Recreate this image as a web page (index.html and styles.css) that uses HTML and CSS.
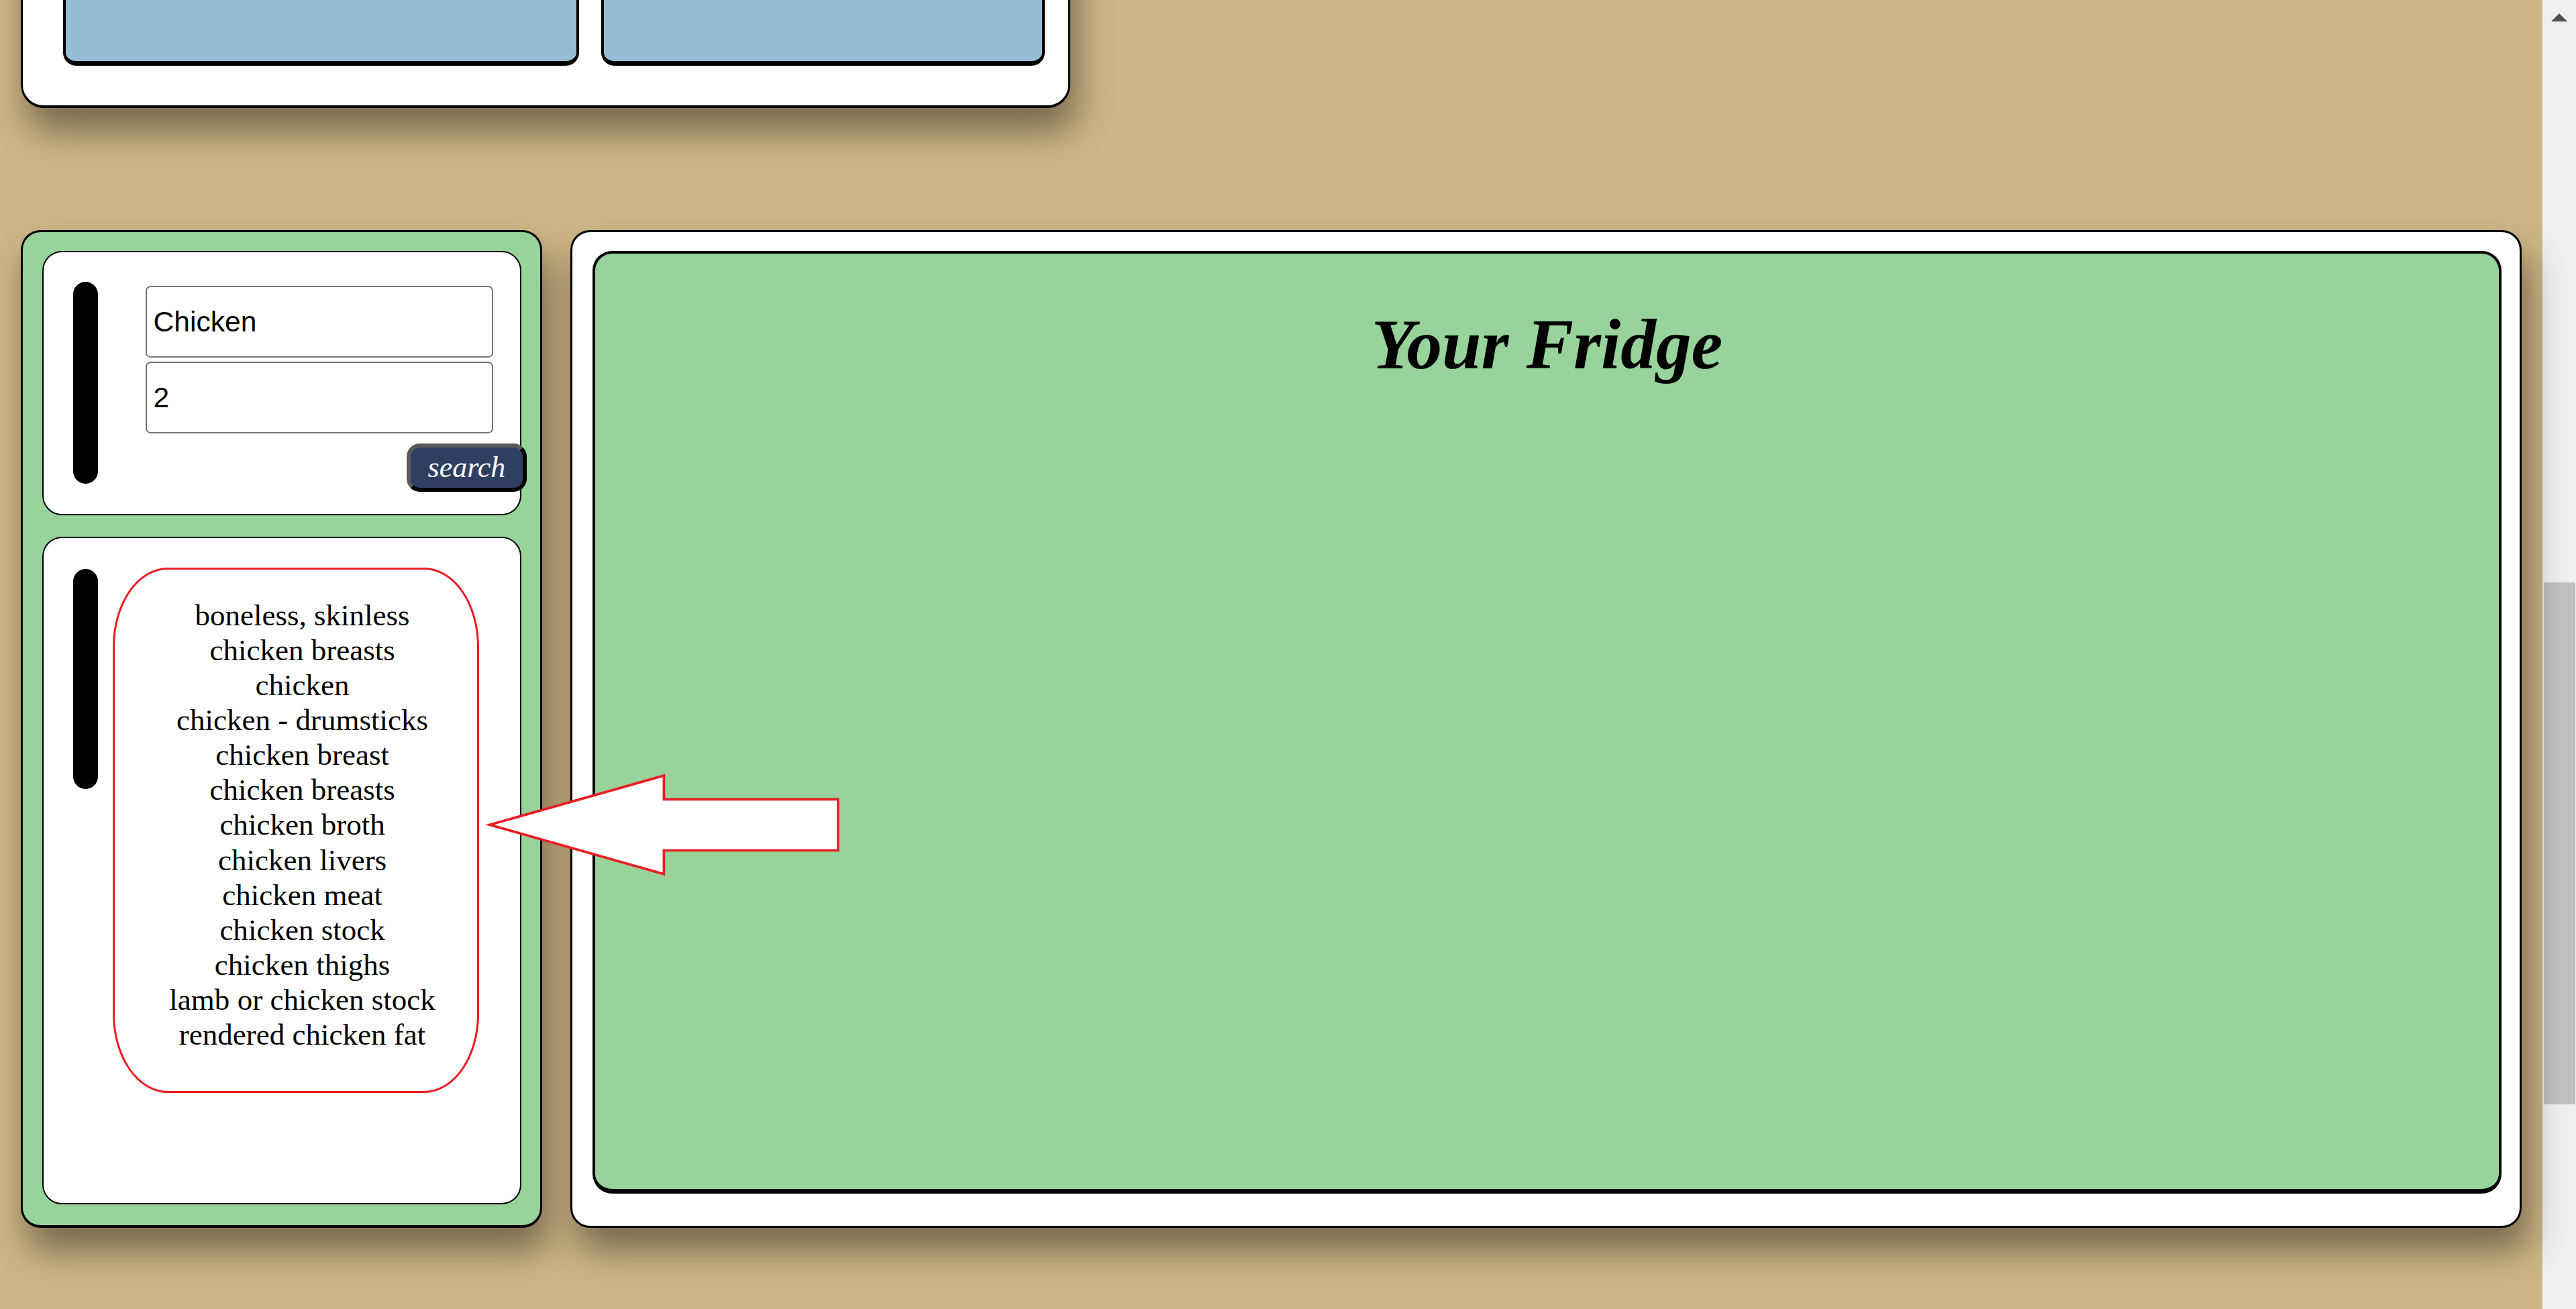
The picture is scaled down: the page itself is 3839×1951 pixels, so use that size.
FILE: index.html
```html
<!DOCTYPE html>
<html lang="en">
<head>
<meta charset="utf-8">
<title>Your Fridge</title>
<link rel="stylesheet" href="styles.css">
</head>
<body>
<div class="page">
  <header class="top-panel">
    <div class="nav-tile tile-wide"></div>
    <div class="nav-tile tile-narrow"></div>
  </header>
  <main class="workspace">
    <aside class="side-panel">
      <section class="card search-card">
        <div class="handle"></div>
        <form class="search-form">
          <input class="field" type="text" value="Chicken">
          <input class="field field-second" type="text" value="2">
          <button type="button" class="search-btn">search</button>
        </form>
      </section>
      <section class="card results-card">
        <div class="handle handle-tall"></div>
        <div class="results">
          <div>boneless, skinless chicken breasts</div>
          <div>chicken</div>
          <div>chicken - drumsticks</div>
          <div>chicken breast</div>
          <div>chicken breasts</div>
          <div>chicken broth</div>
          <div>chicken livers</div>
          <div>chicken meat</div>
          <div>chicken stock</div>
          <div>chicken thighs</div>
          <div>lamb or chicken stock</div>
          <div>rendered chicken fat</div>
        </div>
      </section>
    </aside>
    <section class="fridge-panel">
      <div class="fridge">
        <h1 class="fridge-title">Your Fridge</h1>
      </div>
    </section>
    <svg class="drag-arrow" viewBox="0 0 216 64" width="216" height="64" aria-hidden="true">
      <polygon points="2,32 108,2 108,16.5 214,16.5 214,47.6 108,47.6 108,62" fill="#ffffff" stroke="#EC1C24" stroke-width="1.5"/>
    </svg>
  </main>
</div>
<div class="scrollbar">
  <div class="sb-arrow sb-up"></div>
  <div class="sb-thumb"></div>
</div>
</body>
</html>
```

FILE: styles.css
```css
html {
  zoom: 2.4483;
}

body {
  margin: 0;
  height: 797px;
  overflow: hidden;
  display: flex;
  background: #CEB686;
  font-family: "Liberation Serif", "Times New Roman", serif;
  color: #000;
}

.page {
  flex: 1;
  min-width: 0;
  padding-left: 12.5px;
}

/* ---------- top navigation panel (scrolled partly out of view) ---------- */
.top-panel {
  box-sizing: border-box;
  width: 639px;
  height: 265.6px;
  margin-top: -200px;
  display: flex;
  gap: 13.4px;
  padding: 24px 14px 24px 24.7px;
  background: #fff;
  border: 1.5px solid #000;
  border-bottom-width: 2px;
  border-radius: 0 0 14px 14px;
  box-shadow: 4px 14px 22px rgba(0, 0, 0, 0.42);
}

.nav-tile {
  box-sizing: border-box;
  background: #96BDD6;
  border: 2px solid #000;
  border-bottom-width: 3px;
  border-radius: 0 0 8px 8px;
}

.tile-wide { width: 314px; }
.tile-narrow { width: 270px; }

/* ---------- workspace ---------- */
.workspace {
  position: relative;
  margin-top: 74.4px;
  display: grid;
  grid-template-columns: 317.5px 1188px;
  column-gap: 17px;
}

.side-panel {
  box-sizing: border-box;
  display: flex;
  flex-direction: column;
  padding: 11.5px 11.5px 12.5px 12px;
  background: #97D39A;
  border: 1.5px solid #000;
  border-bottom-width: 2px;
  border-radius: 12px;
  box-shadow: 4px 14px 22px rgba(0, 0, 0, 0.42);
}

.card {
  box-sizing: border-box;
  display: flex;
  align-items: flex-start;
  background: #fff;
  border: 1px solid #000;
  border-radius: 12px;
}

.handle {
  flex-shrink: 0;
  width: 15px;
  height: 123px;
  background: #000;
  border-radius: 8px;
}

.handle-tall {
  height: 134px;
}

/* search card */
.search-card {
  height: 161px;
  padding: 18px;
}

.search-form {
  flex-shrink: 0;
  width: 232px;
  margin: 2.5px 0 0 29px;
  display: flex;
  flex-direction: column;
  align-items: flex-start;
}

.field {
  box-sizing: border-box;
  width: 211.5px;
  height: 43.6px;
  margin: 0;
  padding: 0 4px;
  border: 1px solid #767676;
  border-radius: 3px;
  background: #fff;
  font-family: "Liberation Sans", Arial, sans-serif;
  font-size: 17.4px;
  color: #000;
}

.field-second {
  margin-top: 2.5px;
}

.search-btn {
  align-self: flex-end;
  box-sizing: border-box;
  width: 73px;
  height: 29.5px;
  margin-top: 6.3px;
  padding: 0;
  border: 2.7px solid;
  border-color: #5A5A5A #000 #000 #5A5A5A;
  border-radius: 8px;
  background: #2F3F61;
  color: #fff;
  font-family: "Liberation Serif", "Times New Roman", serif;
  font-style: italic;
  font-size: 18px;
  line-height: 1;
}

/* results card */
.results-card {
  flex: 1;
  margin-top: 13px;
  padding: 19px 18px;
}

.results {
  box-sizing: border-box;
  flex-shrink: 0;
  width: 223px;
  height: 320px;
  margin: -1px 0 0 9px;
  padding: 17.3px 16px 0 24px;
  border: 1.5px solid #EC1C24;
  border-radius: 15%;
  text-align: center;
  font-size: 18.4px;
  line-height: 21.25px;
}

/* fridge */
.fridge-panel {
  box-sizing: border-box;
  padding: 11.5px 11.1px 19.5px 12.5px;
  background: #fff;
  border: 1.5px solid #000;
  border-radius: 12px;
  box-shadow: 4px 14px 22px rgba(0, 0, 0, 0.42);
}

.fridge {
  box-sizing: border-box;
  height: 574px;
  background: #97D39A;
  border: 2px solid #000;
  border-bottom-width: 3px;
  border-radius: 12px;
  text-align: center;
}

.fridge-title {
  margin: 0;
  padding-top: 30.8px;
  font-size: 43px;
  font-weight: bold;
  font-style: italic;
  line-height: normal;
}

/* arrow overlay */
.drag-arrow {
  position: absolute;
  left: 283.5px;
  top: 330px;
  overflow: visible;
}

/* ---------- scrollbar ---------- */
.scrollbar {
  flex-shrink: 0;
  width: 20.4px;
  height: 797px;
  background: #F0F0F0;
  display: flex;
  flex-direction: column;
  align-items: center;
}

.sb-arrow {
  width: 0;
  height: 0;
  border-left: 5.1px solid transparent;
  border-right: 5.1px solid transparent;
}

.sb-up {
  margin-top: 8.2px;
  border-bottom: 5.3px solid #505050;
}

.sb-thumb {
  align-self: flex-start;
  width: 19.2px;
  height: 317.7px;
  margin: 341.5px 0 0 0.8px;
  background: #C1C1C1;
}
```
